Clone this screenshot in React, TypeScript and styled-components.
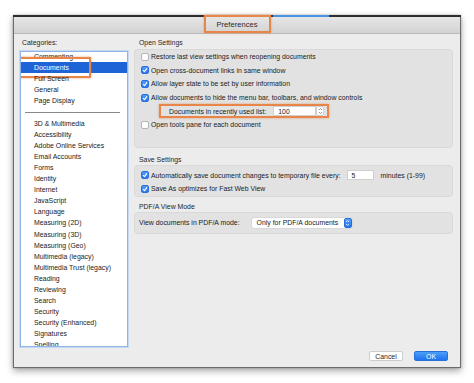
import React from "react";
import styled, { createGlobalStyle } from "styled-components";

const GlobalStyle = createGlobalStyle`
  html, body {
    margin: 0;
    padding: 0;
    background: #ffffff;
  }
  body {
    font-family: "Liberation Sans", Arial, sans-serif;
    font-size: 6.9px;
    color: #1a1a1a;
  }
`;

const ORANGE = "#e8864a";

const Page = styled.div`
  width: 474px;
  height: 383px;
  padding: 15px 0 0 13px;
  box-sizing: border-box;
`;

const Window = styled.div`
  width: 448px;
  height: 353px;
  box-sizing: border-box;
  display: flex;
  flex-direction: column;
  background: #ececec;
  border: 1px solid #6c6c6c;
  border-top: none;
  box-shadow: 0 3px 7px rgba(0, 0, 0, 0.35), 0 0 2px rgba(0, 0, 0, 0.25);
`;

const TopEdge = styled.div`
  display: flex;
  height: 2px;
  margin: 0 -1px;
`;

const EdgePart = styled.div<{ $w?: number; $blue?: boolean }>`
  height: 100%;
  background: ${(p) => (p.$blue ? "#4a93e0" : "#2e2e2e")};
  ${(p) => (p.$w ? `width: ${p.$w}px;` : "flex: 1;")}
`;

const TitleBar = styled.div`
  height: 16px;
  display: flex;
  justify-content: center;
  background: linear-gradient(#e6e6e6, #d3d3d3);
  border-bottom: 1px solid #b9b9b9;
`;

const TitleBox = styled.div`
  margin-top: -2px;
  height: 18px;
  width: 67px;
  box-sizing: border-box;
  border: 2px solid ${ORANGE};
  box-shadow: 0 0 2px rgba(232, 134, 74, 0.7);
  display: flex;
  align-items: center;
  justify-content: center;
  font-size: 7.6px;
  color: #2a2a2a;
`;

const Body = styled.div`
  flex: 1;
  display: flex;
  flex-direction: column;
`;

const Main = styled.div`
  display: grid;
  grid-template-columns: 108px 1fr;
  column-gap: 6px;
  padding: 4px 7px 0 6px;
`;

const Column = styled.div`
  display: flex;
  flex-direction: column;
`;

const SectionLabel = styled.div<{ $indent?: number; $top?: number }>`
  height: 10px;
  line-height: 10px;
  padding-left: ${(p) => p.$indent ?? 0}px;
  margin-top: ${(p) => p.$top ?? 0}px;
  color: #262626;
`;

const ListBox = styled.div`
  margin-top: 3px;
  height: 296px;
  box-sizing: border-box;
  background: #ffffff;
  border: 1px solid #90b5ea;
  box-shadow: 0 0 0 1px #c6d9f3;
  overflow: hidden;
`;

const ListInner = styled.div`
  margin-top: -1px;
`;

const ListRow = styled.div<{ $selected?: boolean }>`
  position: relative;
  height: 11.1px;
  line-height: 11.1px;
  padding-left: 13px;
  white-space: nowrap;
  background: ${(p) => (p.$selected ? "#1f64d6" : "transparent")};
  color: ${(p) => (p.$selected ? "#ffffff" : "#1a1a1a")};
`;

const SeparatorRow = styled.div`
  height: 11.1px;
  display: flex;
  align-items: center;
  padding: 0 7px 0 4px;
`;

const SeparatorLine = styled.div`
  flex: 1;
  height: 1px;
  background: #8a8a8a;
`;

const Highlight = styled.div`
  position: absolute;
  left: -4px;
  top: -5px;
  width: 74px;
  height: 21px;
  box-sizing: border-box;
  border: 2px solid ${ORANGE};
  box-shadow: 0 0 2px rgba(232, 134, 74, 0.7);
`;

const Group = styled.div<{ $pad: string; $top?: number }>`
  margin-top: ${(p) => p.$top ?? 0}px;
  background: #e2e2e2;
  border: 1px solid #d9d9d9;
  border-radius: 4px;
  padding: ${(p) => p.$pad};
`;

const Row = styled.div<{ $h?: number }>`
  height: ${(p) => p.$h ?? 13.6}px;
  display: flex;
  align-items: center;
  white-space: nowrap;
`;

const Box = styled.span<{ $checked?: boolean }>`
  width: 8px;
  height: 8px;
  box-sizing: border-box;
  border-radius: 2px;
  margin-right: 2px;
  flex: none;
  display: flex;
  align-items: center;
  justify-content: center;
  background: ${(p) => (p.$checked ? "linear-gradient(#4f9bf8, #2a77ee)" : "#ffffff")};
  border: 1px solid ${(p) => (p.$checked ? "#2a6fd8" : "#b5b5b5")};
`;

const RecentBox = styled.div`
  margin-left: 18px;
  height: 14px;
  box-sizing: border-box;
  display: flex;
  align-items: center;
  padding: 0 3px 0 8px;
  border: 2px solid ${ORANGE};
  box-shadow: 0 0 2px rgba(232, 134, 74, 0.7);
`;

const FieldLabel = styled.span`
  margin-right: 7px;
`;

const TextField = styled.div<{ $w: number }>`
  width: ${(p) => p.$w}px;
  height: 10px;
  box-sizing: border-box;
  background: #ffffff;
  border: 1px solid #d0d0d0;
  display: flex;
  align-items: center;
  padding-left: 4px;
`;

const Stepper = styled.div<{ $blue?: boolean }>`
  width: 8px;
  height: 10px;
  box-sizing: border-box;
  border-radius: 2px;
  display: flex;
  align-items: center;
  justify-content: center;
  background: ${(p) => (p.$blue ? "linear-gradient(#56a0f9, #2673ee)" : "#ffffff")};
  border: 1px solid ${(p) => (p.$blue ? "#2a6fd8" : "#d0d0d0")};
`;

const Gap = styled.span<{ $w: number }>`
  display: inline-block;
  width: ${(p) => p.$w}px;
  flex: none;
`;

const Select = styled.div`
  width: 100px;
  height: 10px;
  display: flex;
  align-items: center;
  background: #ffffff;
  border-radius: 2px;
  box-shadow: 0 0 0 0.5px #cfcfcf;
`;

const SelectText = styled.span`
  flex: 1;
  padding-left: 5px;
`;

const Footer = styled.div`
  flex: 1;
  display: flex;
  justify-content: flex-end;
  align-items: flex-start;
  gap: 11px;
  padding: 4px 12px 0 0;
`;

const Button = styled.div<{ $primary?: boolean }>`
  width: 34px;
  height: 10px;
  box-sizing: border-box;
  border-radius: 2px;
  display: flex;
  align-items: center;
  justify-content: center;
  background: ${(p) => (p.$primary ? "linear-gradient(#4d9ef9, #1f72ee)" : "#ffffff")};
  border: 1px solid ${(p) => (p.$primary ? "#2a6fd8" : "#cdcdcd")};
  color: ${(p) => (p.$primary ? "#ffffff" : "#262626")};
`;

const Check = () => (
  <svg width="6" height="6" viewBox="0 0 6 6">
    <path d="M1 3.1 L2.5 4.6 L5 1.3" fill="none" stroke="#fff" strokeWidth="1.1" />
  </svg>
);

const Chevrons: React.FC<{ color: string }> = ({ color }) => (
  <svg width="5" height="8" viewBox="0 0 5 8">
    <path d="M1 3 L2.5 1.5 L4 3 M1 5 L2.5 6.5 L4 5" fill="none" stroke={color} strokeWidth="0.8" />
  </svg>
);

const Checkbox: React.FC<{ checked?: boolean; label: string }> = ({ checked, label }) => (
  <Row>
    <Box $checked={checked}>{checked && <Check />}</Box>
    <span>{label}</span>
  </Row>
);

const upper = ["Commenting", "Documents", "Full Screen", "General", "Page Display"];
const lower = [
  "3D & Multimedia",
  "Accessibility",
  "Adobe Online Services",
  "Email Accounts",
  "Forms",
  "Identity",
  "Internet",
  "JavaScript",
  "Language",
  "Measuring (2D)",
  "Measuring (3D)",
  "Measuring (Geo)",
  "Multimedia (legacy)",
  "Multimedia Trust (legacy)",
  "Reading",
  "Reviewing",
  "Search",
  "Security",
  "Security (Enhanced)",
  "Signatures",
  "Spelling",
];

export default function App() {
  return (
    <Page>
      <GlobalStyle />
      <Window>
        <TopEdge>
          <EdgePart $w={260} />
          <EdgePart $w={56} $blue />
          <EdgePart />
        </TopEdge>
        <TitleBar>
          <TitleBox>Preferences</TitleBox>
        </TitleBar>
        <Body>
          <Main>
            <Column>
              <SectionLabel $indent={2}>Categories:</SectionLabel>
              <ListBox>
                <ListInner>
                  {upper.map((name) => (
                    <ListRow key={name} $selected={name === "Documents"}>
                      {name}
                      {name === "Documents" && <Highlight />}
                    </ListRow>
                  ))}
                  <SeparatorRow>
                    <SeparatorLine />
                  </SeparatorRow>
                  {lower.map((name) => (
                    <ListRow key={name}>{name}</ListRow>
                  ))}
                </ListInner>
              </ListBox>
            </Column>
            <Column>
              <SectionLabel $indent={5}>Open Settings</SectionLabel>
              <Group $pad="0 6px 15px 6px" $top={1}>
                <Checkbox label="Restore last view settings when reopening documents" />
                <Checkbox checked label="Open cross-document links in same window" />
                <Checkbox checked label="Allow layer state to be set by user information" />
                <Checkbox
                  checked
                  label="Allow documents to hide the menu bar, toolbars, and window controls"
                />
                <Row>
                  <RecentBox>
                    <FieldLabel>Documents in recently used list:</FieldLabel>
                    <TextField $w={43}>100</TextField>
                    <Stepper>
                      <Chevrons color="#777" />
                    </Stepper>
                  </RecentBox>
                </Row>
                <Checkbox label="Open tools pane for each document" />
              </Group>

              <SectionLabel $indent={5} $top={7}>
                Save Settings
              </SectionLabel>
              <Group $pad="3px 6px 1px 6px">
                <Row $h={13.4}>
                  <Box $checked>
                    <Check />
                  </Box>
                  <span>Automatically save document changes to temporary file every:</span>
                  <Gap $w={6} />
                  <TextField $w={27}>5</TextField>
                  <Gap $w={7} />
                  <span>minutes (1-99)</span>
                </Row>
                <Row $h={13.4}>
                  <Box $checked>
                    <Check />
                  </Box>
                  <span>Save As optimizes for Fast Web View</span>
                </Row>
              </Group>

              <SectionLabel $indent={5} $top={5}>
                PDF/A View Mode
              </SectionLabel>
              <Group $pad="3px 4px 4px 4px">
                <Row $h={13}>
                  <span>View documents in PDF/A mode:</span>
                  <Gap $w={12} />
                  <Select>
                    <SelectText>Only for PDF/A documents</SelectText>
                    <Stepper $blue>
                      <Chevrons color="#fff" />
                    </Stepper>
                  </Select>
                </Row>
              </Group>
            </Column>
          </Main>
          <Footer>
            <Button>Cancel</Button>
            <Button $primary>OK</Button>
          </Footer>
        </Body>
      </Window>
    </Page>
  );
}
